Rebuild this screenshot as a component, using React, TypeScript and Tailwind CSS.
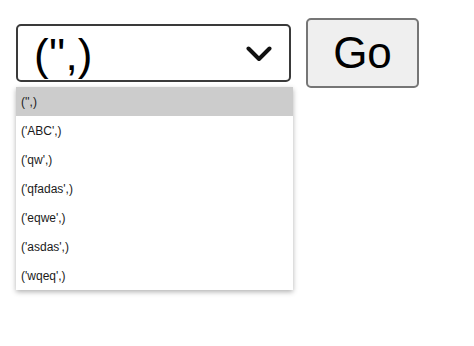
import React from "react";

const options = ["('',)", "('ABC',)", "('qw',)", "('qfadas',)", "('eqwe',)", "('asdas',)", "('wqeq',)"];

export default function App() {
  return (
    <div className="w-[474px] h-[346px] bg-white font-['Liberation_Sans',Arial,sans-serif] text-black">
      <div className="flex items-center gap-[15px] pt-[18px] pl-[16px]">
        <div className="relative">
          <div className="w-[275px] h-[58px] border-2 border-[#3a3a3a] rounded-[5px] bg-white flex items-center justify-between pl-[16px] pr-[17px]">
            <span className="text-[44px] leading-none mt-[3px]">('',)</span>
            <svg width="26" height="16" viewBox="0 0 26 16" className="mt-[1px]">
              <path d="M2.5 2.5 L13 13 L23.5 2.5" fill="none" stroke="#111" strokeWidth="4" strokeLinecap="round" strokeLinejoin="round" />
            </svg>
          </div>
          <div className="absolute left-0 top-[63px] w-[277px] bg-white shadow-[0_2px_5px_rgba(0,0,0,0.3)] z-10">
            {options.map((o, i) => (
              <div
                key={o}
                className={`h-[29px] flex items-center pl-[5px] text-[12px] text-[#1a1a1a] ${i === 0 ? "bg-[#cccccc]" : "bg-white"}`}
              >
                {o}
              </div>
            ))}
          </div>
        </div>
        <button className="w-[113px] h-[70px] bg-[#efefef] border-2 border-[#767676] rounded-[5px] text-[44px] leading-none flex items-center justify-center">
          Go
        </button>
      </div>
    </div>
  );
}
